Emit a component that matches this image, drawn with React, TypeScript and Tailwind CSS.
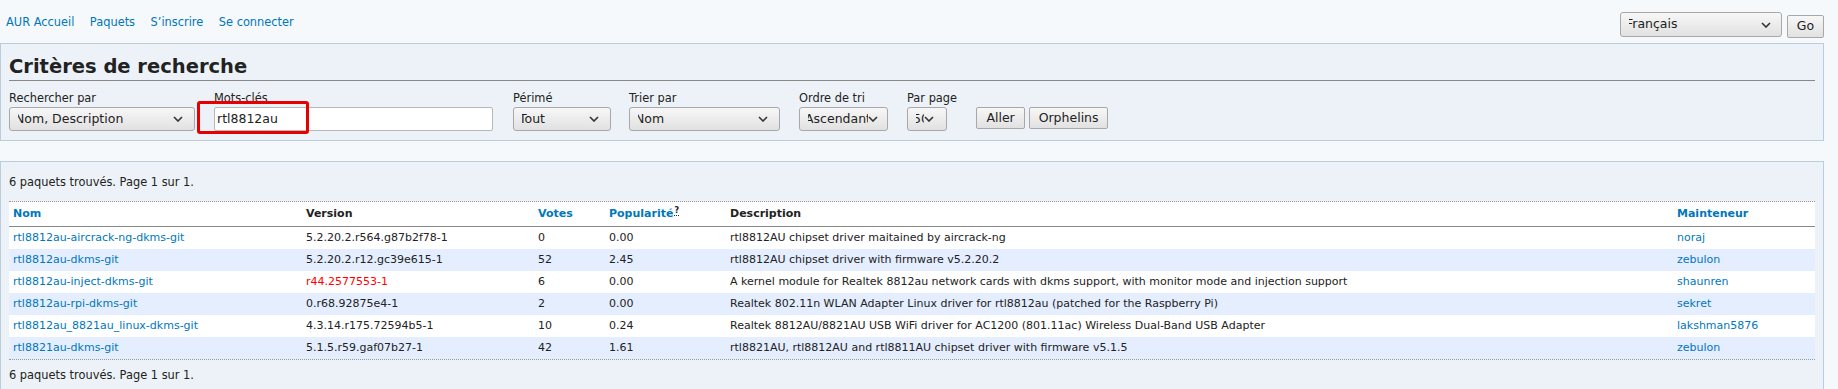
import type { ReactNode } from 'react'

type Pkg = {
  name: string
  version: string
  flagged?: boolean
  votes: string
  pop: string
  desc: string
  maint: string
}

const PACKAGES: Pkg[] = [
  {
    name: 'rtl8812au-aircrack-ng-dkms-git',
    version: '5.2.20.2.r564.g87b2f78-1',
    votes: '0',
    pop: '0.00',
    desc: 'rtl8812AU chipset driver maitained by aircrack-ng',
    maint: 'noraj',
  },
  {
    name: 'rtl8812au-dkms-git',
    version: '5.2.20.2.r12.gc39e615-1',
    votes: '52',
    pop: '2.45',
    desc: 'rtl8812AU chipset driver with firmware v5.2.20.2',
    maint: 'zebulon',
  },
  {
    name: 'rtl8812au-inject-dkms-git',
    version: 'r44.2577553-1',
    flagged: true,
    votes: '6',
    pop: '0.00',
    desc: 'A kernel module for Realtek 8812au network cards with dkms support, with monitor mode and injection support',
    maint: 'shaunren',
  },
  {
    name: 'rtl8812au-rpi-dkms-git',
    version: '0.r68.92875e4-1',
    votes: '2',
    pop: '0.00',
    desc: 'Realtek 802.11n WLAN Adapter Linux driver for rtl8812au (patched for the Raspberry Pi)',
    maint: 'sekret',
  },
  {
    name: 'rtl8812au_8821au_linux-dkms-git',
    version: '4.3.14.r175.72594b5-1',
    votes: '10',
    pop: '0.24',
    desc: 'Realtek 8812AU/8821AU USB WiFi driver for AC1200 (801.11ac) Wireless Dual-Band USB Adapter',
    maint: 'lakshman5876',
  },
  {
    name: 'rtl8821au-dkms-git',
    version: '5.1.5.r59.gaf07b27-1',
    votes: '42',
    pop: '1.61',
    desc: 'rtl8821AU, rtl8812AU and rtl8811AU chipset driver with firmware v5.1.5',
    maint: 'zebulon',
  },
]

function Chevron() {
  return (
    <svg width="10" height="6" viewBox="0 0 10 6" className="shrink-0">
      <path d="M1 1 L5 5 L9 1" fill="none" stroke="#333" strokeWidth="1.6" />
    </svg>
  )
}

// fake native select: first glyph is clipped on the left like in the shot
function FakeSelect({ text, className }: { text: string; className: string }) {
  return (
    <div
      className={`flex items-center rounded-[3px] border border-[#a8a8a8] bg-gradient-to-b from-[#f7f7f7] to-[#e1e1e1] pl-[8px] text-[12.5px] text-[#222] ${className}`}
    >
      <div className="min-w-0 flex-1 overflow-hidden whitespace-nowrap">
        <span className="-ml-[3px] block">{text}</span>
      </div>
      <Chevron />
    </div>
  )
}

function Field({ label, children }: { label: string; children: ReactNode }) {
  return (
    <div className="flex flex-col">
      <label className="whitespace-nowrap text-[11.4px] leading-[16px] text-[#222]">{label}</label>
      <div className="mt-px">{children}</div>
    </div>
  )
}

function Button({ children, className }: { children: ReactNode; className: string }) {
  return (
    <button
      className={`flex items-center justify-center rounded-[2px] border border-[#a8a8a8] bg-gradient-to-b from-[#f7f7f7] to-[#e1e1e1] text-[12.5px] text-[#222] ${className}`}
    >
      {children}
    </button>
  )
}

export default function App() {
  return (
    <div className="min-h-[389px] w-[1838px] bg-[#f6f9fc] font-['DejaVu_Sans',sans-serif] text-[#222]">
      {/* Top bar */}
      <div className="flex h-[43px] w-[1824px] justify-between">
        <nav className="flex gap-[15.5px] pl-[6px] pt-[14px] text-[11.4px] leading-[16px]">
          <a className="text-[#07b]">AUR Accueil</a>
          <a className="text-[#07b]">Paquets</a>
          <a className="text-[#07b]">S’inscrire</a>
          <a className="text-[#07b]">Se connecter</a>
        </nav>
        <div className="flex items-start gap-[5px]">
          <FakeSelect text="Français" className="mt-[12px] h-[25px] w-[162px] pr-[10px]" />
          <Button className="mt-[15px] h-[23px] w-[37px]">Go</Button>
        </div>
      </div>

      {/* Search criteria */}
      <div className="relative w-[1824px] border border-[#bcd] bg-[#ecf2f7] px-[8px] pb-[9px]">
        <h2 className="mt-[11px] border-b border-[#888] pb-[1px] text-[19.5px] font-bold leading-[24px] text-[#222]">
          Critères de recherche
        </h2>
        <div className="mt-[9px] flex items-start">
          <Field label="Rechercher par">
            <FakeSelect text="Nom, Description" className="h-[24px] w-[186px] pr-[11px]" />
          </Field>
          <div className="ml-[19px]">
            <Field label="Mots-clés">
              <div className="flex h-[24px] w-[279px] items-center rounded-[2px] border border-[#b8b8b8] bg-white pl-[2px] text-[12.5px] text-[#222]">
                rtl8812au
              </div>
            </Field>
          </div>
          <div className="ml-[20px]">
            <Field label="Périmé">
              <FakeSelect text="Tout" className="h-[24px] w-[98px] pr-[11px]" />
            </Field>
          </div>
          <div className="ml-[18px]">
            <Field label="Trier par">
              <FakeSelect text="Nom" className="h-[24px] w-[151px] pr-[11px]" />
            </Field>
          </div>
          <div className="ml-[19px]">
            <Field label="Ordre de tri">
              <FakeSelect text="Ascendant" className="h-[24px] w-[89px] pr-[9px]" />
            </Field>
          </div>
          <div className="ml-[19px]">
            <Field label="Par page">
              <FakeSelect text="50" className="h-[24px] w-[40px] pr-[12px]" />
            </Field>
          </div>
          <div className="ml-[19px] flex gap-[4px] pt-[17px]">
            <Button className="h-[22px] w-[49px]">Aller</Button>
            <Button className="h-[22px] w-[79px]">Orphelins</Button>
          </div>
        </div>
        {/* red highlight around the keyword field */}
        <div className="absolute left-[196px] top-[57px] h-[33px] w-[112px] rounded-[3px] border-[3px] border-[#e60000]" />
      </div>

      {/* Results */}
      <div className="mt-[20px] w-[1824px] border border-[#bcd] bg-[#ecf2f7] px-[8px] pb-[20px] pt-[12px]">
        <p className="text-[11.4px] leading-[16px]">6 paquets trouvés. Page 1 sur 1.</p>
        <div className="mt-[11px] border-y border-dotted border-[#999] text-[11px]">
          <div className="flex h-[25px] items-center border-b border-[#888] bg-white font-bold">
            <div className="w-[293px] pl-[4px] text-[#07b]">Nom</div>
            <div className="w-[232px] pl-[4px] text-[#222]">Version</div>
            <div className="w-[71px] pl-[4px] text-[#07b]">Votes</div>
            <div className="w-[121px] pl-[4px]">
              <span className="text-[#07b]">Popularité</span>
              <sup className="ml-px border-b border-dotted border-[#222] text-[8px] text-[#222]">?</sup>
            </div>
            <div className="w-[947px] pl-[4px] text-[#222]">Description</div>
            <div className="flex-1 pl-[4px] text-[#07b]">Mainteneur</div>
          </div>
          {PACKAGES.map((p, i) => (
            <div
              key={p.name}
              className={`flex h-[22px] items-center ${i % 2 === 0 ? 'bg-white' : 'bg-[#e4eeff]'}`}
            >
              <div className="w-[293px] pl-[4px] text-[#07b]">{p.name}</div>
              <div className={`w-[232px] pl-[4px] ${p.flagged ? 'text-[#f00]' : 'text-[#222]'}`}>
                {p.version}
              </div>
              <div className="w-[71px] pl-[4px]">{p.votes}</div>
              <div className="w-[121px] pl-[4px]">{p.pop}</div>
              <div className="w-[947px] whitespace-nowrap pl-[4px]">{p.desc}</div>
              <div className="flex-1 pl-[4px] text-[#07b]">{p.maint}</div>
            </div>
          ))}
        </div>
        <p className="mt-[7px] text-[11.4px] leading-[16px]">6 paquets trouvés. Page 1 sur 1.</p>
      </div>
    </div>
  )
}
